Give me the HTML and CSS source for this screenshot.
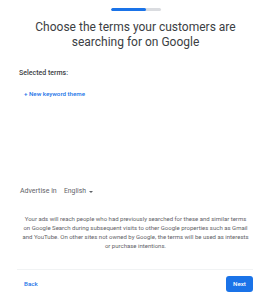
FILE: index.html
```html
<!DOCTYPE html>
<html>
<head>
<meta charset="utf-8">
<link rel="stylesheet" href="styles.css">
</head>
<body>
<div class="page">
  <div class="progress"><div class="progress-fill" style="width:70%"></div></div>
  <h1 class="title">Choose the terms your customers are searching for on Google</h1>
  <div class="section-label">Selected terms:</div>
  <div class="add-link">+ New keyword theme</div>
  <div class="spacer"></div>
  <div class="lang-row">
    <span class="lang-label">Advertise in</span>
    <span class="lang-select">English <span class="caret"></span></span>
  </div>
  <p class="note">Your ads will reach people who had previously searched for these and similar terms on Google Search during subsequent visits to other Google properties such as Gmail and YouTube. On other sites not owned by Google, the terms will be used as interests or purchase intentions.</p>
  <div class="divider"></div>
  <div class="footer">
    <span class="back">Back</span>
    <button class="next">Next</button>
  </div>
</div>
</body>
</html>
```
FILE: styles.css
```css
* { box-sizing: border-box; }
html, body { margin: 0; padding: 0; background: #fff; }
body { font-family: Roboto, "Noto Sans", Arial, sans-serif; width: 271px; height: 300px; overflow: hidden; }
.page { display: flex; flex-direction: column; padding: 0 18px 0 18px; }
.progress { align-self: center; width: 50px; height: 3px; margin-top: 8px; background: #dadce0; border-radius: 2px; overflow: hidden; }
.progress-fill { height: 100%; background: #1a73e8; border-radius: 2px; }
.title { margin: 9px 0 0 0; font-weight: 400; font-size: 12px; line-height: 15px; color: #3c4043; text-align: center; }
.section-label { margin-top: 19px; padding-left: 1px; font-size: 7px; font-weight: 500; color: #3c4043; line-height: 9px; }
.add-link { margin-top: 12px; padding-left: 6px; font-size: 6.2px; font-weight: 500; color: #1a73e8; line-height: 9px; }
.spacer { height: 88px; }
.lang-row { display: flex; align-items: center; padding-left: 2px; font-size: 7px; color: #5f6368; line-height: 9px; }
.lang-label { width: 44px; }
.lang-select { display: inline-flex; align-items: center; color: #5f6368; font-size: 6.8px; }
.caret { margin-left: 3px; width: 0; height: 0; border-left: 2.5px solid transparent; border-right: 2.5px solid transparent; border-top: 2.5px solid #5f6368; }
.note { margin: 18px 0 0 0; font-size: 6px; line-height: 9px; color: #5f6368; text-align: center; padding: 0 3px; }
.divider { margin-top: 19px; height: 1px; background: #f1f3f4; margin-left: -1px; }
.footer { display: flex; justify-content: space-between; align-items: center; margin-top: 6px; padding-left: 6px; }
.back { font-size: 6.2px; font-weight: 500; color: #1a73e8; }
.next { height: 16px; width: 27px; border: none; border-radius: 3px; background: #1a73e8; color: #fff; font-family: inherit; font-size: 6.2px; font-weight: 500; padding: 0; }
```
